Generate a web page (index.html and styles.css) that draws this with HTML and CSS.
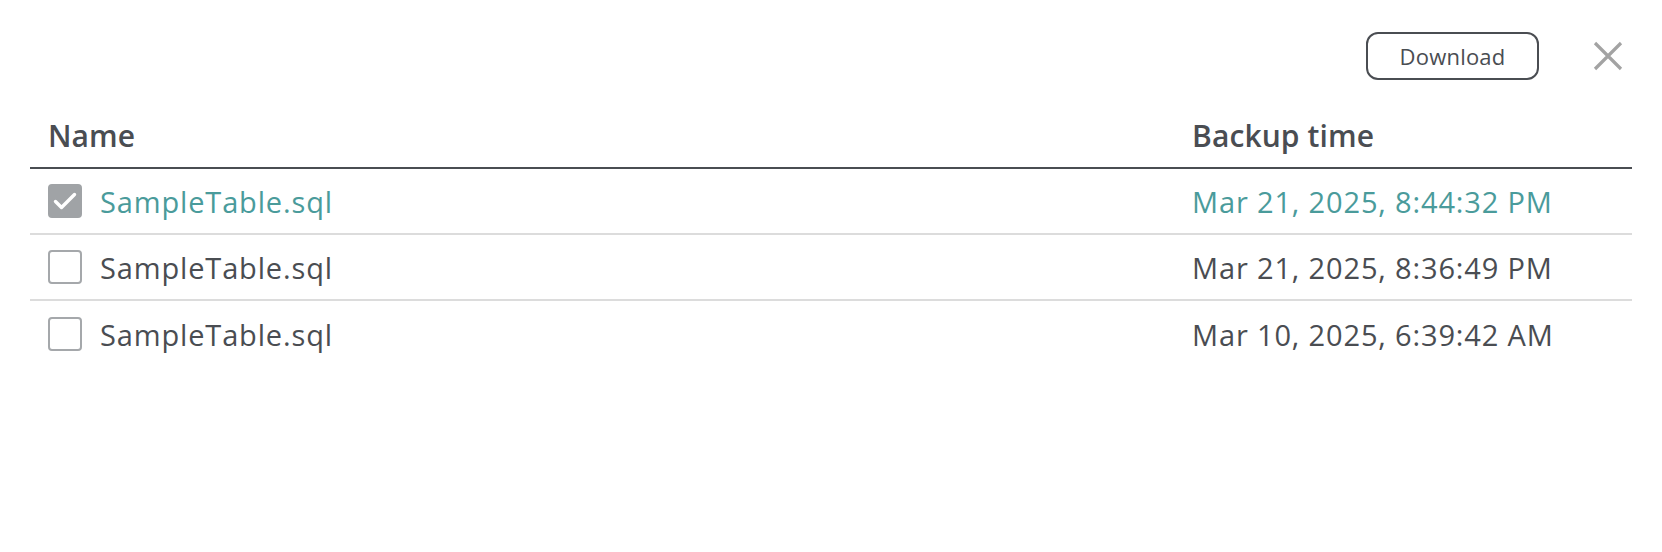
FILE: index.html
```html
<!DOCTYPE html>
<html lang="en">
<head>
<meta charset="utf-8">
<title>Backups</title>
<link rel="stylesheet" href="styles.css">
</head>
<body>
<div class="dialog">
  <div class="toolbar">
    <button class="btn-download" type="button">Download</button>
    <button class="btn-close" type="button" aria-label="Close">
      <svg width="30" height="30" viewBox="0 0 30 30"><path d="M2 2 L28 28 M28 2 L2 28" stroke="#a3a3a3" stroke-width="3.2" stroke-linecap="butt" fill="none"/></svg>
    </button>
  </div>
  <div class="table">
    <div class="row head">
      <div class="cell">Name</div>
      <div class="cell">Backup time</div>
    </div>
    <div class="row selected">
      <div class="cell name-cell">
        <span class="checkbox checked"><svg width="26" height="20" viewBox="0 0 26 20"><path d="M3.5 10.5 L9.5 16.5 L22.5 3.5" stroke="#fff" stroke-width="3.4" fill="none" stroke-linecap="round" stroke-linejoin="round"/></svg></span>
        <span>SampleTable.sql</span>
      </div>
      <div class="cell">Mar 21, 2025, 8:44:32 PM</div>
    </div>
    <div class="row">
      <div class="cell name-cell">
        <span class="checkbox"></span>
        <span>SampleTable.sql</span>
      </div>
      <div class="cell">Mar 21, 2025, 8:36:49 PM</div>
    </div>
    <div class="row last">
      <div class="cell name-cell">
        <span class="checkbox"></span>
        <span>SampleTable.sql</span>
      </div>
      <div class="cell">Mar 10, 2025, 6:39:42 AM</div>
    </div>
  </div>
</div>
</body>
</html>
```
FILE: styles.css
```css
* { box-sizing: border-box; }
html, body { margin: 0; padding: 0; background: #ffffff; }
body {
  font-family: "Open Sans", "Liberation Sans", sans-serif;
  color: #4a4d52;
}
.dialog {
  padding: 32px 30px 0 30px;
}
.toolbar {
  display: flex;
  justify-content: flex-end;
  align-items: center;
  gap: 45px;
  height: 48px;
}
.btn-download {
  width: 173px;
  height: 48px;
  border: 2px solid #4a4d52;
  border-radius: 12px;
  background: #fff;
  font-family: "Open Sans", "Liberation Sans", sans-serif;
  font-size: 22px;
  letter-spacing: 0.2px;
  color: #4a4d52;
  padding: 0;
  cursor: pointer;
}
.btn-close {
  width: 48px;
  height: 48px;
  border: none;
  background: transparent;
  padding: 0;
  display: flex;
  align-items: center;
  justify-content: center;
  cursor: pointer;
}
.table {
  margin-top: 35px;
}
.row {
  display: grid;
  grid-template-columns: 1fr 458px;
  height: 66px;
  border-bottom: 2px solid #dcdcdc;
  font-size: 29px;
  letter-spacing: 0.85px;
  align-items: center;
}
.row.last { border-bottom: none; }
.row.head {
  height: auto;
  font-size: 30px;
  letter-spacing: 0.1px;
  font-weight: 600;
  border-bottom: 2px solid #4a4d52;
  align-items: start;
  padding-bottom: 11px;
  line-height: 41px;
}
.cell {
  padding-left: 18px;
  white-space: nowrap;
}
.name-cell {
  display: flex;
  align-items: center;
  gap: 18px;
}
.row.selected { color: #4a9b9b; }
.checkbox {
  width: 34px;
  height: 34px;
  border: 2px solid #a5a8ab;
  border-radius: 4px;
  background: #fff;
  display: inline-flex;
  align-items: center;
  justify-content: center;
  flex: none;
}
.checkbox.checked {
  background: #a0a3a6;
  border-color: #a0a3a6;
}
```
